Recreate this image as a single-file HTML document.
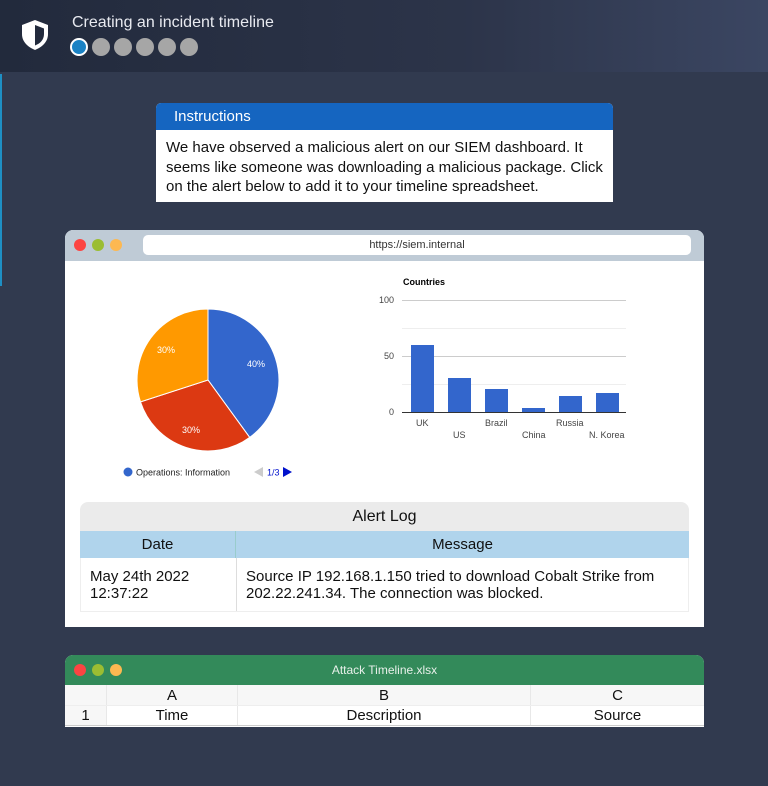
<!DOCTYPE html>
<html><head><style>
*{margin:0;padding:0;box-sizing:border-box}
body{width:768px;height:786px;background:#313a4f;font-family:"Liberation Sans","DejaVu Sans",sans-serif;position:relative;overflow:hidden}
.hdr{position:absolute;left:0;top:0;width:768px;height:72px;background:linear-gradient(90deg,#222a3c,#2c3449 60%,#3b4662)}
.abs{position:absolute}
.ub{font-family:"Liberation Sans","DejaVu Sans",sans-serif}
</style></head><body>
<div class="hdr"></div>
<div class="abs" style="left:0;top:74px;width:2px;height:212px;background:#1e8fc4"></div>
<svg class="abs" style="left:18px;top:18px" width="34" height="34" viewBox="0 0 34 34">
<path d="M17 2 L30 7 V16 C30 24 24 29 17 32 C10 29 4 24 4 16 V7 Z" fill="#fff"/>
<path d="M17 7 L26 10.5 V16 C26 22 22 25.5 17 27.5 Z" fill="#222a3c"/>
</svg>
<div class="abs ub" style="left:72px;top:14px;color:#e8eaf0;font-size:16px">Creating an incident timeline</div>
<div class="abs" style="left:70px;top:38px;width:18px;height:18px;border-radius:50%;background:#1a82c4;border:2px solid #fff"></div>
<div class="abs" style="left:92px;top:38px;width:18px;height:18px;border-radius:50%;background:#a6a6a6"></div>
<div class="abs" style="left:114px;top:38px;width:18px;height:18px;border-radius:50%;background:#a6a6a6"></div>
<div class="abs" style="left:136px;top:38px;width:18px;height:18px;border-radius:50%;background:#a6a6a6"></div>
<div class="abs" style="left:158px;top:38px;width:18px;height:18px;border-radius:50%;background:#a6a6a6"></div>
<div class="abs" style="left:180px;top:38px;width:18px;height:18px;border-radius:50%;background:#a6a6a6"></div>

<div class="abs" style="left:156px;top:103px;width:457px;height:99px;background:#fff;border-radius:5px 5px 0 0;overflow:hidden">
<div class="ub" style="background:#1565c0;color:#fff;height:27px;font-size:15px;padding:5px 0 0 18px">Instructions</div>
<div class="ub" style="color:#111;font-size:15px;line-height:19.5px;padding:8px 6px 0 10px">We have observed a malicious alert on our SIEM dashboard. It seems like someone was downloading a malicious package. Click on the alert below to add it to your timeline spreadsheet.</div>
</div>

<div class="abs" style="left:65px;top:230px;width:639px;height:397px;background:#fff;border-radius:8px 8px 0 0;overflow:hidden">
<div style="height:31px;background:#bfcbd6;position:relative">
<div class="abs" style="left:9px;top:9px;width:12px;height:12px;border-radius:50%;background:#fc4442"></div>
<div class="abs" style="left:27px;top:9px;width:12px;height:12px;border-radius:50%;background:#9bbd32"></div>
<div class="abs" style="left:45px;top:9px;width:12px;height:12px;border-radius:50%;background:#fdb851"></div>
<div class="abs ub" style="left:78px;top:5px;width:548px;height:20px;background:#fff;border-radius:5px;font-size:11px;color:#333;text-align:center;line-height:20px">https://siem.internal</div>
</div>
</div>
<svg class="abs" style="left:0;top:0" width="768" height="500">
<path d="M208 380 L208 309 A71 71 0 0 1 249.7 437.4 Z" fill="#3366cc" stroke="#fff" stroke-width="1"/>
<path d="M208 380 L249.7 437.4 A71 71 0 0 1 140.5 401.9 Z" fill="#dc3912" stroke="#fff" stroke-width="1"/>
<path d="M208 380 L140.5 401.9 A71 71 0 0 1 208 309 Z" fill="#ff9900" stroke="#fff" stroke-width="1"/>
<g font-family="Liberation Sans" font-size="9" fill="#fff">
<text x="247" y="367">40%</text><text x="157" y="353">30%</text><text x="182" y="433">30%</text></g>
<circle cx="128" cy="472" r="4.5" fill="#3366cc"/>
<text x="136" y="475.5" font-family="Liberation Sans" font-size="9" fill="#222">Operations: Information</text>
<path d="M254 472 L263 467 V477 Z" fill="#ccc"/>
<text x="267" y="475.5" font-family="Liberation Sans" font-size="9" fill="#0011cc">1/3</text>
<path d="M283 467 L292 472 L283 477 Z" fill="#0011cc"/>
<text x="403" y="285" font-family="Liberation Sans" font-size="9" font-weight="bold" fill="#000">Countries</text>
<g stroke-width="1"><line x1="402" y1="300.5" x2="626" y2="300.5" stroke="#ccc"/><line x1="402" y1="328.5" x2="626" y2="328.5" stroke="#eee"/><line x1="402" y1="356.5" x2="626" y2="356.5" stroke="#ccc"/><line x1="402" y1="384.5" x2="626" y2="384.5" stroke="#eee"/></g>
<g fill="#3366cc"><rect x="411" y="345" width="23" height="67"/><rect x="448" y="378" width="23" height="34"/><rect x="485" y="389" width="23" height="23"/><rect x="522" y="408" width="23" height="4"/><rect x="559" y="396" width="23" height="16"/><rect x="596" y="393" width="23" height="19"/></g>
<line x1="402" y1="412.5" x2="626" y2="412.5" stroke="#333"/>
<g font-family="Liberation Sans" font-size="9" fill="#444"><text x="379" y="303">100</text><text x="384" y="359">50</text><text x="389" y="415">0</text>
<text x="416" y="426">UK</text><text x="453" y="438">US</text><text x="485" y="426">Brazil</text><text x="522" y="438">China</text><text x="556" y="426">Russia</text><text x="589" y="438">N. Korea</text></g>
</svg>

<div class="abs ub" style="left:80px;top:502px;width:609px;height:110px;border-radius:8px 8px 0 0;overflow:hidden;background:#fff">
<div style="height:29px;background:#ebebeb;text-align:center;font-size:16px;line-height:29px;color:#111">Alert Log</div>
<div style="display:flex;height:27px;background:#b0d4ec;font-size:15px;line-height:27px;color:#111"><div style="width:156px;text-align:center;border-right:1px solid #9cc">Date</div><div style="flex:1;text-align:center">Message</div></div>
<div style="display:flex;height:54px;font-size:15px;line-height:17px;color:#111;border:1px solid #eee;border-top:none"><div style="width:156px;padding:10px 9px;border-right:1px solid #ddd">May 24th 2022<br>12:37:22</div><div style="flex:1;padding:10px 9px">Source IP 192.168.1.150 tried to download Cobalt Strike from 202.22.241.34. The connection was blocked.</div></div>
</div>

<div class="abs ub" style="left:65px;top:655px;width:639px;height:72px;background:#fff;border-radius:8px 8px 0 0;overflow:hidden">
<div style="height:30px;background:#338a5a;position:relative;text-align:center;color:#e8f0ea;font-size:12px;line-height:30px">Attack Timeline.xlsx
<div class="abs" style="left:9px;top:9px;width:12px;height:12px;border-radius:50%;background:#fc4442"></div>
<div class="abs" style="left:27px;top:9px;width:12px;height:12px;border-radius:50%;background:#9bbd32"></div>
<div class="abs" style="left:45px;top:9px;width:12px;height:12px;border-radius:50%;background:#fdb851"></div></div>
<div style="display:flex;height:21px;background:#f7f7f7;font-size:15px;line-height:21px;color:#111;text-align:center;border-bottom:1px solid #eee"><div style="width:41px"></div><div style="width:131px;border-left:1px solid #e8e8e8">A</div><div style="width:293px;border-left:1px solid #e8e8e8">B</div><div style="flex:1;border-left:1px solid #e8e8e8">C</div></div>
<div style="display:flex;height:20px;font-size:15px;line-height:20px;color:#111;text-align:center;border-bottom:1px solid #ccc"><div style="width:41px;background:#f7f7f7">1</div><div style="width:131px;border-left:1px solid #e8e8e8">Time</div><div style="width:293px;border-left:1px solid #e8e8e8">Description</div><div style="flex:1;border-left:1px solid #e8e8e8">Source</div></div>
</div>
</body></html>
